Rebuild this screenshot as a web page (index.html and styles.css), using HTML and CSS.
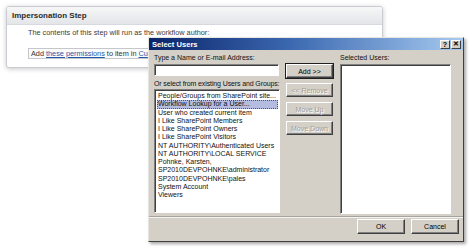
FILE: index.html
```html
<!DOCTYPE html>
<html lang="en">
<head>
  <meta charset="UTF-8">
  <title>Select Users</title>
  <link rel="stylesheet" href="styles.css">
</head>
<body>
  <div class="page">
    <div class="panel">
      <div class="panel-title">Impersonation Step</div>
      <div class="panel-body">
        <p class="desc">The contents of this step will run as the workflow author:</p>
        <div class="action-box">Add <a href="#">these permissions</a> to item in <a href="#">Cu</a></div>
      </div>
    </div>

    <div class="dialog">
      <div class="dialog-title">
        <span>Select Users</span>
        <div class="title-btns">
          <span class="tbtn">?</span>
          <span class="tbtn">&#x2715;</span>
        </div>
      </div>

      <div class="dialog-body">
        <div class="col-left">
          <label class="lbl">Type a Name or E-mail Address:</label>
          <div class="textbox"></div>
          <label class="lbl lbl-second">Or select from existing Users and Groups:</label>
          <ul class="listbox">
            <li>People/Groups from SharePoint site...</li>
            <li class="selected">Workflow Lookup for a User...</li>
            <li>User who created current item</li>
            <li>I Like SharePoint Members</li>
            <li>I Like SharePoint Owners</li>
            <li>I Like SharePoint Visitors</li>
            <li>NT AUTHORITY\Authenticated Users</li>
            <li>NT AUTHORITY\LOCAL SERVICE</li>
            <li>Pohnke, Karsten,</li>
            <li>SP2010DEVPOHNKE\administrator</li>
            <li>SP2010DEVPOHNKE\pales</li>
            <li>System Account</li>
            <li>Viewers</li>
          </ul>
        </div>

        <div class="col-mid">
          <button class="btn btn-default">Add &gt;&gt;</button>
          <button class="btn" disabled>&lt;&lt; Remove</button>
          <button class="btn" disabled>Move Up</button>
          <button class="btn" disabled>Move Down</button>
        </div>

        <div class="col-right">
          <label class="lbl">Selected Users:</label>
          <ul class="listbox listbox-tall"></ul>
        </div>
      </div>

      <div class="dialog-footer">
        <button class="btn btn-foot">OK</button>
        <button class="btn btn-foot">Cancel</button>
      </div>
    </div>
  </div>
</body>
</html>
```

FILE: styles.css
```css
* {
  margin: 0;
  padding: 0;
  box-sizing: border-box;
}

body {
  font-family: 'Liberation Sans', Arial, sans-serif;
  background-color: #ffffff;
  width: 474px;
  height: 248px;
  overflow: hidden;
}

.page {
  position: relative;
  padding: 6px 0 0 6px;
  height: 248px;
}

/* background workflow panel */

.panel {
  width: 377px;
  height: 62px;
  background-color: #ffffff;
  border: 1px solid #c9ccd1;
  border-radius: 3px;
  box-shadow: 0 1px 5px rgba(0, 0, 0, 0.22);
  overflow: hidden;
}

.panel-title {
  height: 18px;
  line-height: 18px;
  padding-left: 5px;
  font-size: 8px;
  font-weight: bold;
  color: #2c2c2c;
  background: linear-gradient(#f7f7f7, #e3e5e8);
  border-bottom: 1px solid #d6d9dd;
}

.panel-body {
  padding: 3px 0 0 21px;
}

.desc {
  font-size: 7.3px;
  line-height: 10px;
  color: #3b3b3b;
}

/* the dialog covers the rest of this box */
.action-box {
  margin-top: 10px;
  width: 121px;
  height: 11px;
  line-height: 9px;
  padding: 0 2px;
  font-size: 7.3px;
  color: #333333;
  border: 1px solid #c4c8cd;
  border-right: none;
  background-color: #fbfbfb;
  white-space: nowrap;
}

.action-box a {
  color: #1f5aa8;
  text-decoration: underline;
}

/* Select Users dialog */

.dialog {
  position: absolute;
  left: 148px;
  top: 37px;
  width: 316px;
  height: 205px;
  background-color: #d4d0c8;
  border: 1px solid;
  border-color: #e8e6e2 #404040 #404040 #e8e6e2;
  box-shadow: 2px 2px 3px rgba(0, 0, 0, 0.35);
  font-size: 7px;
  color: #111111;
  display: flex;
  flex-direction: column;
}

.dialog-title {
  height: 12px;
  padding: 0 2px 0 3px;
  display: flex;
  align-items: center;
  justify-content: space-between;
  background: linear-gradient(to right, #0a246a, #3b68b0 45%, #a6caf0);
  color: #ffffff;
  font-size: 7.6px;
  font-weight: bold;
}

.title-btns {
  display: flex;
  gap: 1px;
}

.tbtn {
  width: 10px;
  height: 9px;
  display: flex;
  align-items: center;
  justify-content: center;
  background-color: #d4d0c8;
  color: #000000;
  font-size: 7px;
  font-weight: bold;
  border: 1px solid;
  border-color: #ffffff #404040 #404040 #ffffff;
}

.dialog-body {
  display: grid;
  grid-template-columns: 126px 47px 112px;
  column-gap: 6px;
  padding: 4px 0 0 5px;
}

.col-left,
.col-right {
  display: flex;
  flex-direction: column;
}

.col-right {
  margin-left: 1px;
}

.lbl {
  height: 10px;
  line-height: 8px;
  white-space: nowrap;
}

.lbl-second {
  margin-top: 4px;
  height: 9px;
  letter-spacing: -0.12px;
}

.textbox {
  width: 125px;
  height: 12px;
  background-color: #ffffff;
  border: 1px solid;
  border-color: #808080 #ffffff #ffffff #808080;
  box-shadow: inset 1px 1px 0 #404040;
}

.listbox {
  list-style: none;
  height: 124px;
  padding: 2px 1px 0 2px;
  background-color: #ffffff;
  border: 1px solid;
  border-color: #808080 #ffffff #ffffff #808080;
  box-shadow: inset 1px 1px 0 #404040;
  line-height: 8.25px;
  overflow: hidden;
}

.listbox li {
  white-space: nowrap;
  padding-left: 1px;
}

.listbox .selected {
  background-color: #b4bddf;
  outline: 1px dotted #555555;
  outline-offset: -1px;
}

.listbox-tall {
  height: 150px;
}

.col-mid {
  display: flex;
  flex-direction: column;
  gap: 5px;
  padding-top: 10px;
}

.btn {
  height: 14px;
  font-family: inherit;
  font-size: 7px;
  color: #000000;
  background-color: #d4d0c8;
  border: 1px solid;
  border-color: #ffffff #404040 #404040 #ffffff;
  box-shadow: inset -1px -1px 0 #808080;
}

.btn:disabled {
  color: #a09d98;
  text-shadow: 1px 1px 0 #ffffff;
}

.btn-default {
  outline: 1px solid #202020;
}

.dialog-footer {
  margin-top: 2px;
  border-top: 1px solid #a7a49e;
  box-shadow: inset 0 1px 0 #f4f3f0;
  display: flex;
  justify-content: flex-end;
  gap: 6px;
  padding: 2px 4px 0 0;
}

.btn-foot {
  width: 48px;
  height: 15px;
}
```
